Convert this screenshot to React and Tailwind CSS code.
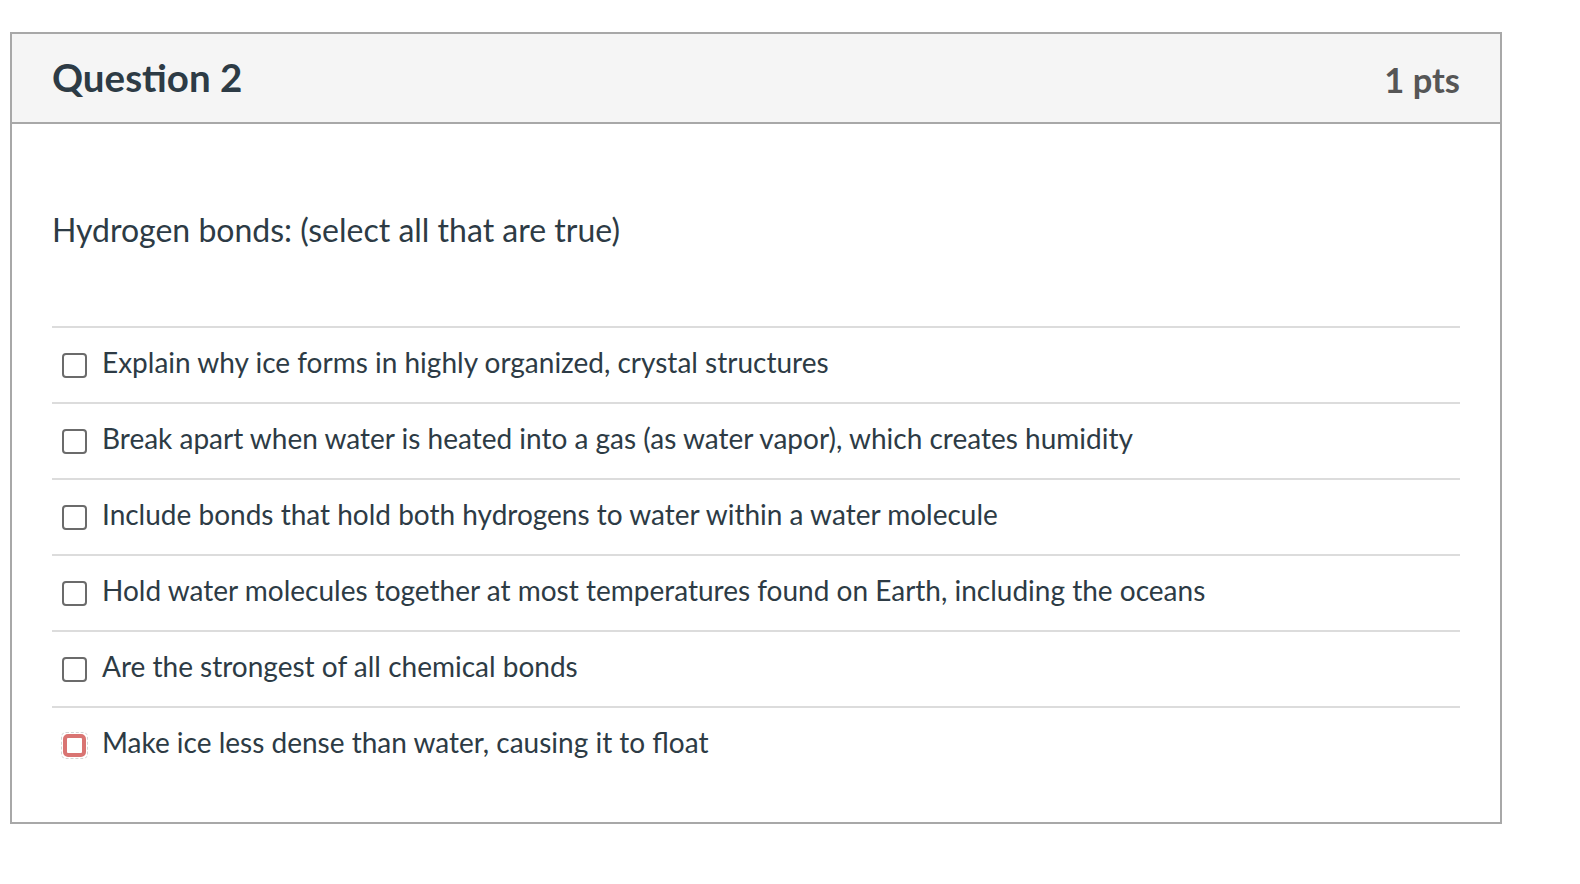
import { useState } from "react";

const answers = [
  "Explain why ice forms in highly organized, crystal structures",
  "Break apart when water is heated into a gas (as water vapor), which creates humidity",
  "Include bonds that hold both hydrogens to water within a water molecule",
  "Hold water molecules together at most temperatures found on Earth, including the oceans",
  "Are the strongest of all chemical bonds",
  "Make ice less dense than water, causing it to float",
];

const Checkbox = ({ focused }) => {
  if (focused) {
    return (
      <span className="relative flex h-[27px] w-[27px] flex-shrink-0 items-center justify-center rounded-[5px] border border-dashed border-[#d4d4d4]">
        <span className="h-[23px] w-[23px] rounded-[5px] border-[4px] border-[#d97472] bg-white" />
      </span>
    );
  }
  return (
    <span className="flex h-[27px] w-[27px] flex-shrink-0 items-center justify-center">
      <span className="h-[25px] w-[25px] rounded-[4px] border-2 border-[#6b6b6b] bg-white" />
    </span>
  );
};

export default function App() {
  const [checked, setChecked] = useState([]);

  const toggle = (i) =>
    setChecked((c) => (c.includes(i) ? c.filter((x) => x !== i) : [...c, i]));

  return (
    <div className="min-h-screen bg-white pl-[10px] pt-[32px] font-['Lato',_'Noto_Sans',_sans-serif] text-[#2d3b45]">
      <div className="w-[1492px] border-2 border-[#a8a8a8] bg-white">
        {/* Header */}
        <div className="flex h-[90px] items-center justify-between border-b-2 border-[#a8a8a8] bg-[#f5f5f5] px-[40px]">
          <h2 className="mb-[2px] text-[38.5px] font-bold leading-none text-[#2d3b45]">Question 2</h2>
          <span className="mt-[4px] text-[34.5px] font-bold leading-none text-[#565656]">1 pts</span>
        </div>

        {/* Body */}
        <div className="px-[40px] pb-[40px]">
          <p className="pt-[82px] pb-[72px] text-[32px] leading-[48px]">
            Hydrogen bonds: (select all that are true)
          </p>

          <div>
            {answers.map((a, i) => (
              <label
                key={i}
                onClick={() => toggle(i)}
                className="flex h-[76px] cursor-pointer items-center gap-[14px] border-t-2 border-[#dcdcdc] pl-[9px]"
              >
                <Checkbox focused={i === answers.length - 1} />
                <span className="mb-[6px] text-[28px] leading-none">{a}</span>
              </label>
            ))}
          </div>
        </div>
      </div>
    </div>
  );
}
